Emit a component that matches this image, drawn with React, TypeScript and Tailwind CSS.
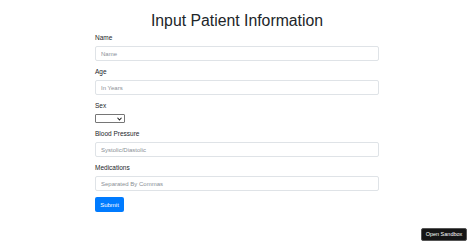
import React, { useState } from 'react'

export default function App() {
  const [sex, setSex] = useState('')

  return (
    <div className="relative w-[474px] h-[248px] bg-white text-[#212529] font-['Liberation_Sans',Arial,sans-serif]">
      <div className="w-[284px] ml-[95px] flex flex-col">
        {/* Title */}
        <h1 className="text-[15.8px] leading-[20px] text-center pt-[11px] h-[33px]">Input Patient Information</h1>

        <Field label="Name" placeholder="Name" />
        <Field label="Age" placeholder="In Years" />

        {/* Sex */}
        <div className="flex flex-col mb-[6px]">
          <label className="text-[6.5px] leading-[10px] mb-[3px]">Sex</label>
          <div className="relative w-[30px] h-[9px]">
            <select
              value={sex}
              onChange={(e) => setSex(e.target.value)}
              className="block appearance-none w-[30px] h-[9px] min-h-0 p-0 border border-[#767676] rounded-[1px] bg-white text-[6px] leading-none outline-none"
            >
              <option value=""></option>
              <option value="M">Male</option>
              <option value="F">Female</option>
            </select>
            <svg className="absolute right-[3px] top-[2.5px] w-[5px] h-[4px] pointer-events-none" viewBox="0 0 10 8">
              <path d="M1 1.5 L5 6 L9 1.5" fill="none" stroke="#222" strokeWidth="2.2" />
            </svg>
          </div>
        </div>

        <Field label="Blood Pressure" placeholder="Systolic/Diastolic" />
        <Field label="Medications" placeholder="Separated By Commas" />

        <div className="flex">
          <button className="w-[29px] h-[15px] rounded-[2px] bg-[#007bff] text-white text-[6px] leading-none">
            Submit
          </button>
        </div>
      </div>

      {/* Open Sandbox */}
      <button className="absolute right-[7px] bottom-[7px] w-[46px] h-[13px] rounded-[2px] bg-[#151515] border border-[#555] text-white text-[5.5px] leading-none">
        Open Sandbox
      </button>
    </div>
  )
}

function Field({ label, placeholder }: { label: string; placeholder: string }) {
  return (
    <div className="flex flex-col mb-[6px]">
      <label className="text-[6.5px] leading-[10px] mb-[3px]">{label}</label>
      <input
        type="text"
        placeholder={placeholder}
        className="w-full h-[15px] px-[5px] text-[6px] border border-[#dfe3e7] rounded-[2px] placeholder:text-[#8a9096] outline-none"
      />
    </div>
  )
}
